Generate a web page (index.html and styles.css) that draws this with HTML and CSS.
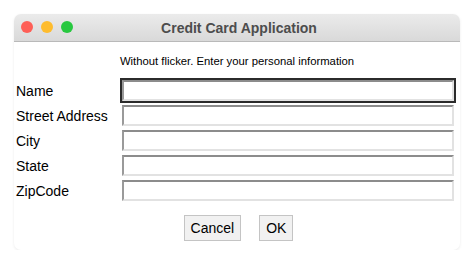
FILE: index.html
```html
<!DOCTYPE html>
<html lang="en">
<head>
  <meta charset="UTF-8">
  <meta name="viewport" content="width=device-width, initial-scale=1">
  <title>Credit Card Application</title>
  <link rel="stylesheet" href="styles.css">
</head>
<body>

<div class="window">
  <div class="titlebar">
    <div class="lights">
      <span class="light red"></span>
      <span class="light yellow"></span>
      <span class="light green"></span>
    </div>
    <div class="title">Credit Card Application</div>
  </div>

  <div class="content">
    <p class="subtitle">Without flicker. Enter your personal information</p>

    <div class="form">
      <label class="label" for="name">Name</label>
      <input type="text" class="field focused" id="name" />
      <label class="label" for="street">Street Address</label>
      <input type="text" class="field" id="street" />
      <label class="label" for="city">City</label>
      <input type="text" class="field" id="city" />
      <label class="label" for="state">State</label>
      <input type="text" class="field" id="state" />
      <label class="label" for="zip">ZipCode</label>
      <input type="text" class="field" id="zip" />
    </div>

    <div class="buttons">
      <button class="button">Cancel</button>
      <button class="button">OK</button>
    </div>
  </div>
</div>

</body>
</html>
```

FILE: styles.css
```css
/* Main styles */
body {
  font-family: 'Liberation Sans', Arial, sans-serif;
  margin: 0;
  padding: 0;
  background-color: #fff;
  color: #000;
}

.window {
  width: 446px;
  margin: 14px 0 0 14px;
  background: #fff;
  border-radius: 7px;
  box-shadow: 0 1px 3px rgba(0, 0, 0, 0.08);
}

.titlebar {
  position: relative;
  height: 27px;
  background: linear-gradient(#ebebeb, #d9d9d9);
  border-bottom: 1px solid #b9b9b9;
  border-radius: 7px 7px 0 0;
  display: flex;
  align-items: center;
  justify-content: center;
}

.lights {
  position: absolute;
  left: 7px;
  top: 7px;
  display: flex;
  gap: 8px;
}

.light {
  width: 12px;
  height: 12px;
  border-radius: 50%;
}

.red { background: #fe5f57; }
.yellow { background: #febc2e; }
.green { background: #28c840; }

.title {
  font-size: 14px;
  font-weight: bold;
  color: #4d4d4d;
  padding-left: 4px;
}

.content {
  padding: 0 4px 9px 2px;
}

.subtitle {
  margin: 12px 0 12px;
  padding-left: 2px;
  text-align: center;
  font-size: 11.3px;
  line-height: 14px;
}

.form {
  display: grid;
  grid-template-columns: 106px 332px;
  grid-auto-rows: 21px;
  row-gap: 4px;
  align-items: center;
}

.label {
  font-size: 14px;
}

.field {
  box-sizing: border-box;
  width: 332px;
  height: 21px;
  margin: 0;
  padding: 0 3px;
  border: 2px solid;
  border-color: #8c8c8c #e2e2e2 #e2e2e2 #9a9a9a;
  background: #fff;
  font-size: 13px;
}

.field.focused {
  outline: 2px solid #2b2b2b;
  outline-offset: 0;
}

.buttons {
  display: flex;
  justify-content: center;
  gap: 18px;
  margin-top: 14px;
  padding-left: 5px;
}

.button {
  height: 26px;
  padding: 0 6px;
  background: #f1f1f1;
  border: 1px solid #c4c4c4;
  border-radius: 0;
  font-family: 'Liberation Sans', Arial, sans-serif;
  font-size: 14px;
  color: #000;
}
```
